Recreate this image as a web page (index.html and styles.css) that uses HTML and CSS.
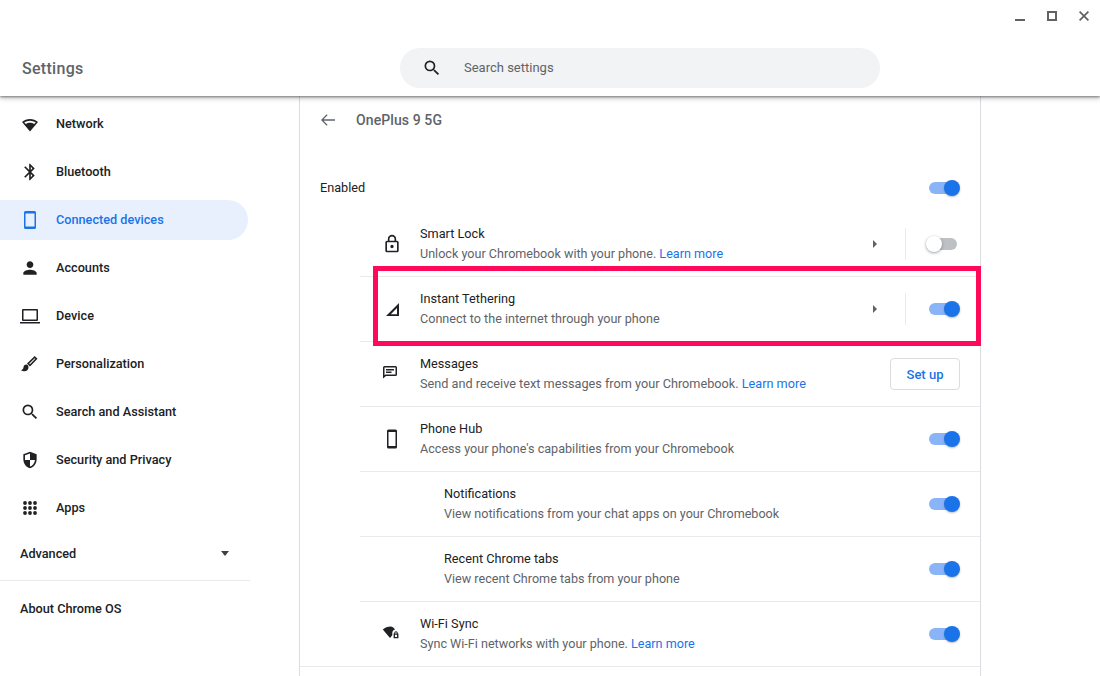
FILE: index.html
```html
<!DOCTYPE html>
<html lang="en">
<head>
<meta charset="utf-8">
<title>Settings</title>
<link rel="stylesheet" href="styles.css">
</head>
<body>
<div class="titlebar">
  <svg class="winicon" viewBox="0 0 10 10"><rect x="0" y="8" width="10" height="2"/></svg>
  <svg class="winicon" viewBox="0 0 10 10"><path d="M0 0h10v10H0zM2 2v6h6V2z" fill-rule="evenodd"/></svg>
  <svg class="winicon" viewBox="0 0 10 10"><path d="M1.200 0 5 3.800 8.800 0 10 1.200 6.200 5 10 8.800 8.800 10 5 6.200 1.200 10 0 8.800 3.800 5 0 1.200z"/></svg>
</div>
<header class="header">
  <div class="brand">Settings</div>
  <div class="search">
    <svg class="icon" viewBox="0 0 24 24"><path d="M15.500 14h-.79l-.28-.27A6.470 6.470 0 0 0 16 9.500 6.500 6.500 0 1 0 9.500 16c1.610 0 3.090-.59 4.230-1.570l.27.28v.79l5 4.990L20.490 19l-4.990-5zm-6 0C7.010 14 5 11.990 5 9.500S7.010 5 9.500 5 14 7.010 14 9.500 11.990 14 9.500 14z"/></svg>
    <span>Search settings</span>
  </div>
</header>
<div class="layout">
  <nav class="sidebar">
    <a class="nav-item"><svg class="icon" viewBox="0 0 20 20"><path d="M10 17.500 2 8C4.200 6 7 5 10 5s5.800 1 8 3zM4.300 8.200l1.500 1.700C7 9.200 8.500 8.700 10 8.700s3 .5 4.200 1.200l1.500-1.700C13.900 7.200 12 6.700 10 6.700s-3.900.5-5.700 1.500z" fill-rule="evenodd"/></svg><span>Network</span></a>
    <a class="nav-item"><svg class="icon" viewBox="0 0 24 24"><path d="M17.710 7.710 12 2h-1v7.590L6.410 5 5 6.410 10.590 12 5 17.590 6.410 19 11 14.410V22h1l5.710-5.710-4.300-4.290 4.300-4.290zM13 5.830l1.880 1.880L13 9.590V5.830zm1.880 10.460L13 18.170v-3.760l1.880 1.880z"/></svg><span>Bluetooth</span></a>
    <a class="nav-item active"><svg class="icon" viewBox="0 0 20 20"><path d="M5.500 1h9A1.500 1.500 0 0 1 16 2.500v15a1.500 1.500 0 0 1-1.500 1.500h-9A1.500 1.500 0 0 1 4 17.500v-15A1.500 1.500 0 0 1 5.500 1zm0 2.500v13h9v-13z" fill-rule="evenodd"/></svg><span>Connected devices</span></a>
    <a class="nav-item"><svg class="icon" viewBox="0 0 24 24"><path d="M12 12c2.210 0 4-1.790 4-4s-1.790-4-4-4-4 1.790-4 4 1.790 4 4 4zm0 2c-2.670 0-8 1.340-8 4v2h16v-2c0-2.660-5.330-4-8-4z"/></svg><span>Accounts</span></a>
    <a class="nav-item"><svg class="icon" viewBox="0 0 20 20"><path d="M3 3h14a1 1 0 0 1 1 1v10a1 1 0 0 1-1 1H3a1 1 0 0 1-1-1V4a1 1 0 0 1 1-1zm.500 1.500v9h13v-9zM0 16h20v1.500H0z" fill-rule="evenodd"/></svg><span>Device</span></a>
    <a class="nav-item"><svg class="icon" viewBox="0 0 20 20"><path d="M14.700 2 17.500 4.800 10 12.500 7 9.500zM14.700 4.200 9.200 9.500 10 10.300 15.300 4.800z" fill-rule="evenodd"/><path d="M6.500 10.500c-1.800 0-3 1.300-3 2.800 0 1.500-1 2.400-2.500 2.900 1 .7 2.500 1 3.500 1 2.200 0 4-1.500 4-3.700 0-1.700-.8-3-2-3z"/></svg><span>Personalization</span></a>
    <a class="nav-item"><svg class="icon" viewBox="0 0 24 24"><path d="M15.500 14h-.79l-.28-.27A6.470 6.470 0 0 0 16 9.500 6.500 6.500 0 1 0 9.500 16c1.610 0 3.090-.59 4.230-1.570l.27.28v.79l5 4.990L20.490 19l-4.990-5zm-6 0C7.010 14 5 11.990 5 9.500S7.010 5 9.500 5 14 7.010 14 9.500 11.990 14 9.500 14z"/></svg><span>Search and Assistant</span></a>
    <a class="nav-item"><svg class="icon" viewBox="0 0 24 24"><path d="M12 2 4 5v6.090c0 5.050 3.410 9.760 8 10.910 4.590-1.150 8-5.860 8-10.910V5zm0 2.200V12H6V6.400zM12 12h6c-.5 3.900-2.900 6.900-6 7.900z" fill-rule="evenodd"/></svg><span>Security and Privacy</span></a>
    <a class="nav-item"><svg class="icon" viewBox="0 0 20 20"><circle cx="5" cy="5" r="1.900"/><circle cx="10" cy="5" r="1.900"/><circle cx="15" cy="5" r="1.900"/><circle cx="5" cy="10" r="1.900"/><circle cx="10" cy="10" r="1.900"/><circle cx="15" cy="10" r="1.900"/><circle cx="5" cy="15" r="1.900"/><circle cx="10" cy="15" r="1.900"/><circle cx="15" cy="15" r="1.900"/></svg><span>Apps</span></a>
    <div class="advanced"><span>Advanced</span><i class="caret"></i></div>
    <div class="divider"></div>
    <div class="about">About Chrome OS</div>
  </nav>
  <main class="page">
    <div class="sub-head">
      <svg class="back" viewBox="0 0 16 16"><path d="M16 7.250H2.900l4.600-4.700L6.500 1.500 0 8l6.500 6.500 1-1.050-4.600-4.700H16z"/></svg>
      <h1>OnePlus 9 5G</h1>
    </div>
    <div class="enabled"><span>Enabled</span><div class="toggle on"></div></div>
    <section class="rows">
      <div class="row">
        <svg class="icon row-icon" viewBox="0 0 24 24"><path d="M18 8h-1V6A5 5 0 0 0 7 6v2H6a2 2 0 0 0-2 2v10a2 2 0 0 0 2 2h12a2 2 0 0 0 2-2V10a2 2 0 0 0-2-2zM9 6a3 3 0 0 1 6 0v2H9zm9 14H6V10h12zm-6-3a2 2 0 1 0 0-4 2 2 0 0 0 0 4z"/></svg>
        <div class="text"><div class="name">Smart Lock</div><div class="desc">Unlock your Chromebook with your phone. <a>Learn more</a></div></div>
        <i class="arrow"></i><i class="sep"></i><div class="toggle off"></div>
      </div>
      <div class="row">
        <svg class="icon row-icon" viewBox="0 0 20 20"><path d="M17 4v13H4zM15 9 8.800 15.200H15z" fill-rule="evenodd"/></svg>
        <div class="text"><div class="name">Instant Tethering</div><div class="desc">Connect to the internet through your phone</div></div>
        <i class="arrow"></i><i class="sep"></i><div class="toggle on"></div>
        <div class="highlight"></div>
      </div>
      <div class="row">
        <svg class="icon row-icon" viewBox="0 0 20 20"><path d="M2.500 2h11A1.500 1.500 0 0 1 15 3.500v7a1.500 1.500 0 0 1-1.500 1.500H4l-3 2.500V3.500A1.500 1.500 0 0 1 2.500 2zM2.500 3.500v7.700l1-.7h10v-7zM4 5h8v1.500H4zM4 7.500h5.500V9H4z" fill-rule="evenodd"/></svg>
        <div class="text"><div class="name">Messages</div><div class="desc msg">Send and receive text messages from your Chromebook. <a>Learn more</a></div></div>
        <button class="setup">Set up</button>
      </div>
      <div class="row">
        <svg class="icon row-icon" viewBox="0 0 20 20"><path d="M6.500 .5h7A1.500 1.500 0 0 1 15 2v16a1.500 1.500 0 0 1-1.500 1.500h-7A1.500 1.500 0 0 1 5 18V2A1.500 1.500 0 0 1 6.500 .5zm0 2.500v14h7V3z" fill-rule="evenodd"/></svg>
        <div class="text"><div class="name">Phone Hub</div><div class="desc">Access your phone's capabilities from your Chromebook</div></div>
        <div class="toggle on"></div>
      </div>
      <div class="row nested">
        <div class="text"><div class="name">Notifications</div><div class="desc">View notifications from your chat apps on your Chromebook</div></div>
        <div class="toggle on"></div>
      </div>
      <div class="row nested">
        <div class="text"><div class="name">Recent Chrome tabs</div><div class="desc">View recent Chrome tabs from your phone</div></div>
        <div class="toggle on"></div>
      </div>
      <div class="row last">
        <svg class="icon row-icon" viewBox="0 0 20 20"><path d="M8.500 2.500C5.800 2.500 3 3.500.8 5.500L8 14l2.300-2.700V9c0-1.800 1-3 2.700-3.600C11.800 3.500 10.200 2.500 8.500 2.500z"/><path d="M15.700 9.500V9c0-1-.7-1.700-1.700-1.700s-1.700.7-1.700 1.700v.5h-.7V14.200h4.800V9.500zm-2.500-.5c0-.5.400-.8.800-.8s.8.300.8.800v.5h-1.600zM13 10.700h2V13h-2z" fill-rule="evenodd"/></svg>
        <div class="text"><div class="name">Wi-Fi Sync</div><div class="desc">Sync Wi-Fi networks with your phone. <a>Learn more</a></div></div>
        <div class="toggle on"></div>
      </div>
    </section>
  </main>
</div>
</body>
</html>
```
FILE: styles.css
```css
* { box-sizing: border-box; }
html, body { margin: 0; height: 100%; }
body {
  width: 1100px;
  height: 676px;
  overflow: hidden;
  background: #fff;
  color: #202124;
  font: 12.700px/20px Roboto, "Liberation Sans", sans-serif;
}
.titlebar {
  height: 40px;
  display: flex;
  justify-content: flex-end;
  gap: 22px;
  padding: 11px 11px 0 0;
}
.winicon { width: 10px; height: 10px; fill: #5f6368; }
.header {
  position: relative;
  z-index: 2;
  height: 56px;
  display: flex;
  padding-top: 8px;
  background: #fff;
  box-shadow: 0 1px 2px rgba(60,64,67,.55), 0 2px 5px rgba(60,64,67,.35);
  clip-path: inset(0 0 -12px 0);
}
.brand {
  width: 400px;
  padding: 1px 0 0 22px;
  font-size: 16px;
  font-weight: 500;
  line-height: 40px;
  color: #5f6368;
  letter-spacing: .3px;
}
.search {
  width: 480px;
  height: 40px;
  display: flex;
  align-items: center;
  gap: 22px;
  padding-left: 22px;
  border-radius: 20px;
  background: #f1f3f4;
  color: #5f6368;
  font-size: 13px;
}
.icon { width: 20px; height: 20px; flex: none; fill: #202124; }
.layout { display: flex; height: 580px; }
.sidebar { width: 299px; flex: none; padding-top: 8px; }
.nav-item {
  width: 248px;
  height: 40px;
  margin-bottom: 8px;
  display: flex;
  align-items: center;
  gap: 16px;
  padding-left: 20px;
  border-radius: 0 20px 20px 0;
  font-weight: 500;
}
.nav-item.active { background: #e8f0fe; color: #1a73e8; }
.nav-item.active .icon { fill: #1a73e8; }
.advanced {
  width: 250px;
  height: 40px;
  margin-top: -2px;
  display: flex;
  align-items: center;
  justify-content: space-between;
  padding: 0 21px 0 20px;
  font-weight: 500;
}
.caret {
  width: 0;
  height: 0;
  margin-top: -1px;
  border: 4.500px solid transparent;
  border-top: 5px solid #3c4043;
  border-bottom-width: 0;
}
.divider { width: 250px; height: 1px; margin-top: 6px; background: #e8eaed; }
.about { padding: 18px 20px 16px; font-weight: 500; }
.page {
  width: 682px;
  flex: none;
  border-left: 1px solid #dadce0;
  border-right: 1px solid #dadce0;
}
.sub-head {
  height: 48px;
  display: flex;
  align-items: center;
  gap: 21px;
  padding-left: 21px;
}
.back { width: 14px; height: 14px; fill: #5f6368; }
h1 {
  margin: 0;
  font-size: 14px;
  font-weight: 500;
  color: #5f6368;
  letter-spacing: .1px;
}
.enabled {
  height: 48px;
  margin-top: 20px;
  padding: 0 20px;
  display: flex;
  align-items: center;
  justify-content: space-between;
}
.rows { padding-left: 60px; }
.row {
  position: relative;
  height: 65px;
  display: flex;
  align-items: center;
  padding: 0 20px 0 22px;
  border-bottom: 1px solid #e8eaed;
}
.row.last { margin-left: -60px; padding-left: 82px; }
.row-icon { margin-right: 18px; }
.row.nested { padding-left: 84px; }
.text { flex: 1; }
.desc { color: #5f6368; font-size: 12.600px; }
.desc.msg { font-size: 12.700px; }
.desc a { color: #1a73e8; }
.arrow {
  width: 0;
  height: 0;
  border: 4.500px solid transparent;
  border-left: 4.500px solid #5f6368;
  border-right-width: 0;
  margin-right: 28px;
}
.sep { width: 1px; height: 32px; background: #e8eaed; margin-right: 23px; }
.toggle {
  position: relative;
  width: 31px;
  height: 12px;
  flex: none;
}
.toggle::before {
  content: "";
  position: absolute;
  left: 0;
  top: 0;
  width: 28px;
  height: 12px;
  border-radius: 6px;
  background: #8ab4f8;
}
.toggle::after {
  content: "";
  position: absolute;
  top: -2px;
  left: 15px;
  width: 16px;
  height: 16px;
  border-radius: 50%;
  background: #1a73e8;
  box-shadow: 0 1px 2px rgba(60,64,67,.35);
}
.toggle.off::before { background: #bdc1c6; }
.toggle.off::after { left: -3px; background: #fff; box-shadow: 0 1px 3px rgba(60,64,67,.5); }
.setup {
  width: 70px;
  height: 32px;
  padding: 0;
  background: #fff;
  border: 1px solid #dadce0;
  border-radius: 4px;
  color: #1a73e8;
  font: 500 13px Roboto, "Liberation Sans", sans-serif;
}
.highlight {
  position: absolute;
  left: 13px;
  right: -1px;
  top: -11px;
  height: 80px;
  border: 5px solid #ff0a5a;
  pointer-events: none;
}
```
